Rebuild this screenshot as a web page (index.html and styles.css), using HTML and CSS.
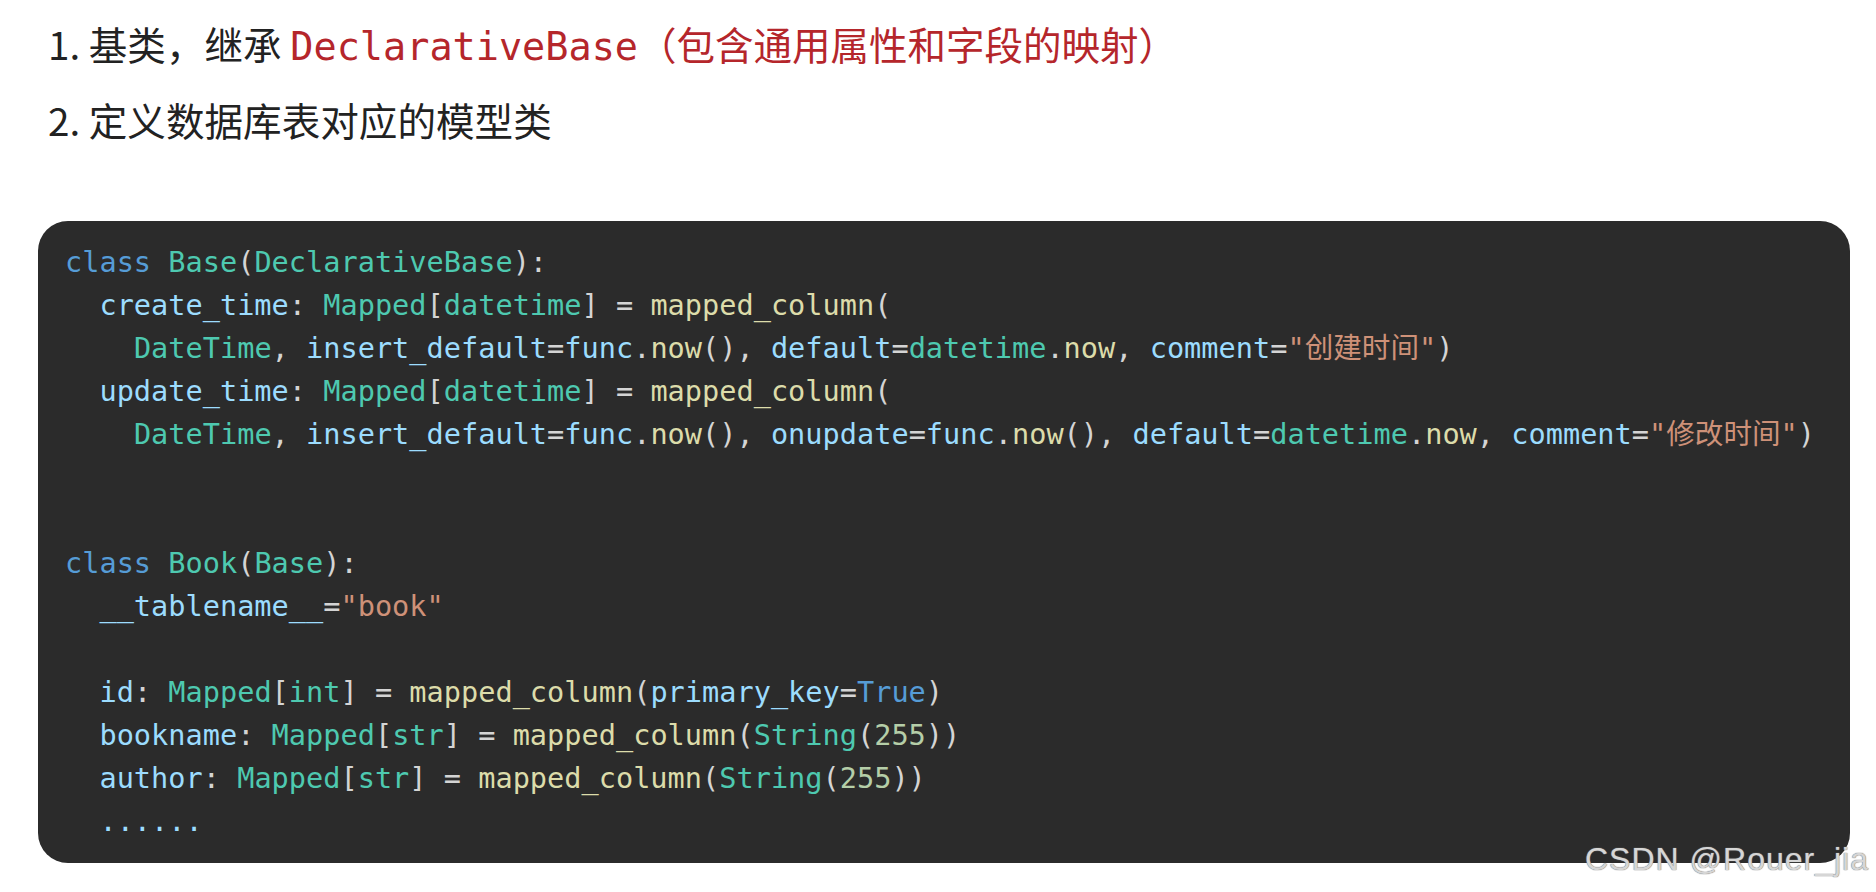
FILE: index.html
```html
<!DOCTYPE html>
<html lang="zh-CN">
<head>
<meta charset="utf-8">
<title>DeclarativeBase</title>
<link rel="stylesheet" href="styles.css">
</head>
<body>
<div class="page">
  <ol class="steps">
    <li><span class="num">1.</span> 基类，继承 <code class="inline">DeclarativeBase（包含通用属性和字段的映射）</code></li>
    <li><span class="num">2.</span> 定义数据库表对应的模型类</li>
  </ol>
  <pre class="code"><code><span class="kw">class</span> <span class="cls">Base</span><span class="p">(</span><span class="cls">DeclarativeBase</span><span class="p">):</span>
  <span class="v">create_time</span><span class="p">:</span> <span class="cls">Mapped</span><span class="p">[</span><span class="cls">datetime</span><span class="p">] = </span><span class="fn">mapped_column</span><span class="p">(</span>
    <span class="cls">DateTime</span><span class="p">, </span><span class="v">insert_default</span><span class="p">=</span><span class="v">func</span><span class="p">.</span><span class="fn">now</span><span class="p">(), </span><span class="v">default</span><span class="p">=</span><span class="cls">datetime</span><span class="p">.</span><span class="fn">now</span><span class="p">, </span><span class="v">comment</span><span class="p">=</span><span class="s">"创建时间"</span><span class="p">)</span>
  <span class="v">update_time</span><span class="p">:</span> <span class="cls">Mapped</span><span class="p">[</span><span class="cls">datetime</span><span class="p">] = </span><span class="fn">mapped_column</span><span class="p">(</span>
    <span class="cls">DateTime</span><span class="p">, </span><span class="v">insert_default</span><span class="p">=</span><span class="v">func</span><span class="p">.</span><span class="fn">now</span><span class="p">(), </span><span class="v">onupdate</span><span class="p">=</span><span class="v">func</span><span class="p">.</span><span class="fn">now</span><span class="p">(), </span><span class="v">default</span><span class="p">=</span><span class="cls">datetime</span><span class="p">.</span><span class="fn">now</span><span class="p">, </span><span class="v">comment</span><span class="p">=</span><span class="s">"修改时间"</span><span class="p">)</span>


<span class="kw">class</span> <span class="cls">Book</span><span class="p">(</span><span class="cls">Base</span><span class="p">):</span>
  <span class="v">__tablename__</span><span class="p">=</span><span class="s">"book"</span>

  <span class="v">id</span><span class="p">:</span> <span class="cls">Mapped</span><span class="p">[</span><span class="cls">int</span><span class="p">] = </span><span class="fn">mapped_column</span><span class="p">(</span><span class="v">primary_key</span><span class="p">=</span><span class="kw">True</span><span class="p">)</span>
  <span class="v">bookname</span><span class="p">:</span> <span class="cls">Mapped</span><span class="p">[</span><span class="cls">str</span><span class="p">] = </span><span class="fn">mapped_column</span><span class="p">(</span><span class="cls">String</span><span class="p">(</span><span class="n">255</span><span class="p">))</span>
  <span class="v">author</span><span class="p">:</span> <span class="cls">Mapped</span><span class="p">[</span><span class="cls">str</span><span class="p">] = </span><span class="fn">mapped_column</span><span class="p">(</span><span class="cls">String</span><span class="p">(</span><span class="n">255</span><span class="p">))</span>
  <span class="v">......</span></code></pre>
  <div class="watermark">CSDN @Rouer_jia</div>
</div>
</body>
</html>
```

FILE: styles.css
```css
html, body {
  margin: 0;
  padding: 0;
  background: #ffffff;
}

.page {
  position: relative;
  width: 1876px;
  height: 892px;
  overflow: hidden;
}

.steps {
  list-style: none;
  margin: 5px 0 0 0;
  padding: 0 0 0 48px;
  font-family: "Noto Sans CJK SC", "Noto Sans", sans-serif;
  font-size: 38.6px;
  color: #222222;
}

.steps li {
  line-height: 76px;
  height: 76px;
  white-space: nowrap;
}

.inline {
  font-family: "DejaVu Sans Mono", "Noto Sans CJK SC", monospace;
  font-size: 38.5px;
  color: #b5262b;
}

.code {
  box-sizing: border-box;
  width: 1812px;
  margin: 64px 0 0 38px;
  padding: 20px 28px 20px 27px;
  background: #2b2b2b;
  border-radius: 30px;
  font-family: "DejaVu Sans Mono", "Noto Sans CJK SC", monospace;
  font-size: 28.6px;
  line-height: 43px;
  color: #d4d4d4;
  white-space: pre;
  overflow: hidden;
}

.code code {
  font-family: inherit;
}

.kw { color: #569cd6; }
.cls { color: #4ec9b0; }
.v { color: #9cdcfe; }
.fn { color: #dcdcaa; }
.s { color: #ce9178; }
.n { color: #b5cea8; }
.p { color: #d4d4d4; }

.watermark {
  position: absolute;
  left: 1585px;
  top: 843px;
  font-family: "Liberation Sans", Arial, sans-serif;
  font-size: 32px;
  line-height: 32px;
  letter-spacing: 1px;
  color: #d6d6d6;
  text-shadow: 0 0 1px #7a7a7a, 0 0 1px #7a7a7a;
  white-space: nowrap;
}
```
